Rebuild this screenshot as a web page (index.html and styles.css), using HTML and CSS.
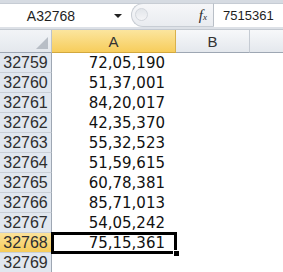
FILE: index.html
```html
<!DOCTYPE html>
<html lang="en">
<head>
    <meta charset="UTF-8">
    <title>Sheet</title>
    <link rel="stylesheet" href="styles.css">
</head>
<body>
    <div class="ribbon-edge"></div>

    <!-- Formula bar -->
    <div class="formula-bar">
        <div class="name-box">
            <span class="name-text">A32768</span>
            <span class="drop-arrow"></span>
        </div>
        <div class="grip">
            <span class="knob"></span>
            <span class="fx"><i>f</i><small>x</small></span>
        </div>
        <div class="formula-input">7515361</div>
    </div>
    <div class="bar-gap"></div>

    <!-- Grid -->
    <div class="sheet">
        <div class="corner"><span class="corner-tri"></span></div>
        <div class="col-head active">A</div>
        <div class="col-head">B</div>
        <div class="col-head last"></div>

        <div class="row-head">32759</div><div class="cell num">72,05,190</div><div class="cell"></div><div class="cell"></div>
        <div class="row-head">32760</div><div class="cell num">51,37,001</div><div class="cell"></div><div class="cell"></div>
        <div class="row-head">32761</div><div class="cell num">84,20,017</div><div class="cell"></div><div class="cell"></div>
        <div class="row-head">32762</div><div class="cell num">42,35,370</div><div class="cell"></div><div class="cell"></div>
        <div class="row-head">32763</div><div class="cell num">55,32,523</div><div class="cell"></div><div class="cell"></div>
        <div class="row-head">32764</div><div class="cell num">51,59,615</div><div class="cell"></div><div class="cell"></div>
        <div class="row-head">32765</div><div class="cell num">60,78,381</div><div class="cell"></div><div class="cell"></div>
        <div class="row-head">32766</div><div class="cell num">85,71,013</div><div class="cell"></div><div class="cell"></div>
        <div class="row-head">32767</div><div class="cell num">54,05,242</div><div class="cell"></div><div class="cell"></div>
        <div class="row-head active">32768</div><div class="cell num selected">75,15,361<span class="fill-handle"></span></div><div class="cell"></div><div class="cell"></div>
        <div class="row-head">32769</div><div class="cell"></div><div class="cell"></div><div class="cell"></div>
    </div>
</body>
</html>
```

FILE: styles.css
```css
body {
    margin: 0;
    width: 283px;
    height: 272px;
    overflow: hidden;
    background-color: white;
    font-family: "Liberation Sans", Arial, sans-serif;
}

.ribbon-edge {
    height: 3px;
    background-color: #d6dbe2;
}

/* Formula bar */
.formula-bar {
    display: flex;
    height: 24px;
    background-color: white;
    border-top: 1px solid #c6ccd4;
    box-sizing: border-box;
}

.name-box {
    width: 131px;
    display: flex;
    align-items: center;
}

.name-text {
    flex: 1;
    text-align: center;
    font-size: 14px;
    color: #1e1e1e;
    padding-left: 8px;
    padding-right: 20px;
}

.drop-arrow {
    width: 0;
    height: 0;
    border-left: 4px solid transparent;
    border-right: 4px solid transparent;
    border-top: 4px solid #222;
    margin-right: 9px;
}

.grip {
    width: 83px;
    display: flex;
    align-items: center;
    justify-content: space-between;
    background: linear-gradient(#f6f7f9, #e9ecf0);
    border: 1px solid #c8cdd4;
    border-right: 1px solid #b9bfc7;
    border-radius: 12px 0 0 12px;
    box-sizing: border-box;
    margin-top: -1px;
    height: 24px;
}

.knob {
    width: 11px;
    height: 11px;
    border-radius: 50%;
    background: linear-gradient(#e2e5ea, #f4f5f7);
    border: 1px solid #d2d6dc;
    margin-left: 3px;
    margin-top: -2px;
}

.fx {
    font-family: "Liberation Serif", serif;
    font-size: 15px;
    color: #2b2b2b;
    margin-right: 6px;
}

.fx small {
    font-size: 9px;
    font-style: italic;
}

.formula-input {
    flex: 1;
    font-size: 13px;
    color: #1e1e1e;
    padding-left: 9px;
    line-height: 23px;
}

.bar-gap {
    height: 2px;
    background-color: #dde1e7;
    border-bottom: 1px solid #c3c9d1;
}

/* Grid */
.sheet {
    display: grid;
    grid-template-columns: 52px 124px 74px 1fr;
    grid-template-rows: 23px repeat(11, 20px);
}

.corner {
    background: linear-gradient(#f2f4f7, #e4e8ed);
    border-right: 1px solid #bcc3cc;
    border-bottom: 1px solid #9ea7b3;
    position: relative;
}

.corner-tri {
    position: absolute;
    right: 3px;
    bottom: 3px;
    width: 0;
    height: 0;
    border-left: 12px solid transparent;
    border-bottom: 12px solid #b8bec6;
}

.col-head {
    background: linear-gradient(#f7f8fa, #e4e8ed);
    border-right: 1px solid #c5cbd3;
    border-bottom: 1px solid #9ea7b3;
    text-align: center;
    font-size: 15px;
    line-height: 23px;
    color: #333;
}

.col-head.active {
    background: linear-gradient(#fbe59e, #f7cd5c);
    border-right: 1px solid #d9b14c;
    border-bottom: 1px solid #d2a83e;
}

.col-head.last {
    border-right: none;
}

.row-head {
    background-color: #e1e7ef;
    border-right: 1px solid #9ea7b3;
    border-bottom: 1px solid #c9cfd7;
    font-size: 16px;
    line-height: 20px;
    text-align: center;
    color: #2e2e2e;
    box-sizing: border-box;
}

.row-head.active {
    background: linear-gradient(#fbe29a, #f6cc5a);
    border-right: 1px solid #d2a83e;
}

.cell {
    background-color: white;
}

.num {
    font-family: "DejaVu Sans", Verdana, sans-serif;
    font-size: 15px;
    line-height: 20px;
    text-align: right;
    padding-right: 11px;
    color: #111;
}

.selected {
    position: relative;
    box-shadow: 0 0 0 1px #000, inset 0 0 0 2px #000;
}

.fill-handle {
    position: absolute;
    right: -3px;
    bottom: -3px;
    width: 5px;
    height: 5px;
    background-color: #000;
    border-left: 1px solid white;
    border-top: 1px solid white;
}
```
